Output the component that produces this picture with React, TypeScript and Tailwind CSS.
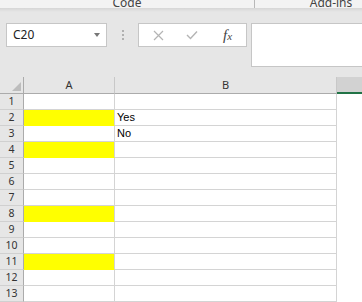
import React from 'react';

const rows = [1, 2, 3, 4, 5, 6, 7, 8, 9, 10, 11, 12, 13];
const yellowRows = [2, 4, 8, 11];
const bText: Record<number, string> = { 2: 'Yes', 3: 'No' };

const App: React.FC = () => {
  return (
    <div className="w-[362px] h-[302px] overflow-hidden bg-[#e6e6e6] font-['Noto_Sans',sans-serif]">
      {/* ribbon tab strip, cut at the top */}
      <div className="h-[8px] bg-[#f3f3f3] flex items-end text-[12px] text-[#444] overflow-hidden">
        <div className="w-[254px] shrink-0 text-center leading-none -mb-[1px]">Code</div>
        <div className="w-px h-[8px] shrink-0 bg-[#b8b8b8]" />
        <div className="w-[152px] shrink-0 text-center leading-none -mb-[1px]">Add-ins</div>
      </div>
      <div className="h-[4px] bg-gradient-to-b from-[#d6d6d6] to-[#e6e6e6]" />

      {/* formula bar */}
      <div className="h-[65px] pt-[11px] flex items-start">
        <div className="ml-[6px] w-[101px] h-[24px] shrink-0 bg-white border border-[#c6c6c6] flex items-center pl-[6px] pr-[6px]">
          <span className="flex-1 text-[12px] text-[#222]">C20</span>
          <span className="w-0 h-0 border-l-[3.5px] border-r-[3.5px] border-t-[4px] border-l-transparent border-r-transparent border-t-[#777]" />
        </div>
        <div className="w-[31px] h-[24px] shrink-0 flex flex-col items-center justify-center gap-[2px]">
          <span className="w-[2px] h-[2px] bg-[#b0b0b0]" />
          <span className="w-[2px] h-[2px] bg-[#b0b0b0]" />
          <span className="w-[2px] h-[2px] bg-[#b0b0b0]" />
        </div>
        <div className="w-[109px] h-[24px] shrink-0 bg-white border border-[#c6c6c6] flex items-center">
          <svg className="ml-[14px]" width="11" height="11" viewBox="0 0 11 11">
            <path d="M1 1L10 10M10 1L1 10" stroke="#b4b4b4" strokeWidth="1.2" fill="none" />
          </svg>
          <svg className="ml-[22px]" width="12" height="10" viewBox="0 0 12 10">
            <path d="M1 5L4.5 8.5L11 1.5" stroke="#b4b4b4" strokeWidth="1.4" fill="none" />
          </svg>
          <span className="ml-[25px] font-['Liberation_Serif',serif] italic text-[15px] text-[#444] leading-none">
            f<span className="text-[11px]">x</span>
          </span>
        </div>
        <div className="ml-[4px] flex-1 h-[44px] bg-white border border-[#c6c6c6] border-r-0" />
      </div>

      {/* grid */}
      <div className="flex h-[17px] text-[11px] text-[#333]">
        <div className="w-[24px] shrink-0 border-r border-b border-[#ababab] flex items-end justify-end pr-[2px] pb-[2px]">
          <svg width="9" height="9" viewBox="0 0 9 9">
            <path d="M9 0L9 9L0 9Z" fill="#bdbdbd" />
          </svg>
        </div>
        <div className="w-[91px] shrink-0 border-r border-r-[#c8c8c8] border-b border-b-[#ababab] flex items-center justify-center">A</div>
        <div className="w-[222px] shrink-0 border-r border-r-[#c8c8c8] border-b border-b-[#ababab] flex items-center justify-center">B</div>
        <div className="flex-1 bg-[#d2d2d2] border-b-2 border-b-[#217346]" />
      </div>
      {rows.map((r) => {
        const yellow = yellowRows.includes(r);
        return (
          <div key={r} className="flex h-[16px]">
            <div className="w-[24px] shrink-0 border-r border-r-[#ababab] border-b border-b-[#d0d0d0] flex items-center justify-center text-[10.5px] text-[#333]">
              {r}
            </div>
            <div
              className={
                yellow
                  ? 'w-[91px] shrink-0 bg-[#ffff00] border-r border-r-[#d4d4d4] border-b border-b-[#ffff00]'
                  : 'w-[91px] shrink-0 bg-white border-r border-b border-[#d4d4d4]'
              }
            />
            <div className="w-[222px] shrink-0 bg-white border-r border-b border-[#d4d4d4] flex items-center pl-[2px] font-['Liberation_Sans',sans-serif] text-[11px] text-black">
              {bText[r] ?? ''}
            </div>
            <div className="flex-1 bg-white" />
          </div>
        );
      })}
    </div>
  );
};

export default App;
